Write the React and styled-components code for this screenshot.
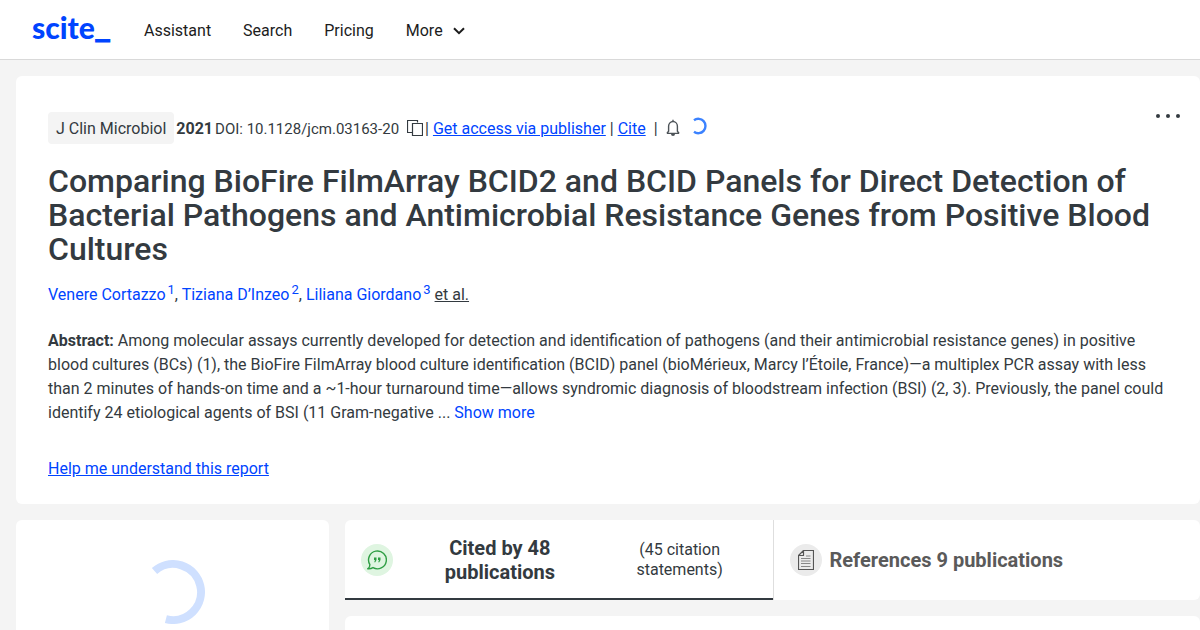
import React from "react";
import styled, { createGlobalStyle } from "styled-components";

const authors = ["Venere Cortazzo", "Tiziana D’Inzeo", "Liliana Giordano"];

function ChevronIcon() {
  return (
    <svg width="12" height="8" viewBox="0 0 12 8" fill="none" aria-hidden="true">
      <path d="M1 1.2l5 5 5-5" stroke="#1c1c1c" strokeWidth="2" />
    </svg>
  );
}

function CopyIcon() {
  return (
    <svg width="16" height="16" viewBox="0 0 16 16" fill="none" aria-hidden="true">
      <path
        d="M5 12.500H.5V.5h10v2M5.500 3.500h10v12h-10z"
        stroke="#333a40"
        strokeWidth="1.200"
      />
    </svg>
  );
}

function BellIcon() {
  return (
    <svg width="14" height="18" viewBox="0 0 14 18" fill="none" aria-hidden="true">
      <path
        d="M7 .8v1.600M.8 14.400h12.400M1 14.200l1.600-2V7.200a4.400 4.700 0 0 1 8.800 0v5l1.600 2"
        stroke="#4d5358"
        strokeWidth="1.400"
      />
      <path d="M5 15a2 2 0 0 0 4 0z" fill="#4d5358" />
    </svg>
  );
}

function QuoteIcon() {
  return (
    <svg width="20" height="20" viewBox="0 0 20 20" fill="none" aria-hidden="true">
      <path
        d="M2.900 14.600A8.900 8.900 0 1 1 6 17.600c-1.300.8-2.900 1.200-5 1.100 1.300-.9 1.900-2.200 1.900-4.100z"
        stroke="#2f9e44"
        strokeWidth="1.400"
      />
      <path
        d="M7 7.500h2.500V10L8.300 12.300H7.200L8 10H7zM11 7.500h2.500V10l-1.200 2.300h-1.100L12 10h-1z"
        fill="#2f9e44"
      />
    </svg>
  );
}

function DocumentIcon() {
  return (
    <svg width="16" height="20" viewBox="0 0 16 20" fill="none" aria-hidden="true">
      <path
        d="M5.500.5h10v19H.5V5.500zM5.500.5v5h-5"
        stroke="#555"
        strokeWidth="1.200"
        strokeLinejoin="round"
      />
      <path d="M8 6h4.500M3 8.500h9.500M3 11h9.500M3 13.500h9.500M3 16.500h9.500" stroke="#888" />
    </svg>
  );
}

function App() {
  return (
    <Page>
      <GlobalStyle />
      <Header>
        <Logo href="#">
          scite<Underscore>_</Underscore>
        </Logo>
        <Nav>
          <NavLink href="#">Assistant</NavLink>
          <NavLink href="#">Search</NavLink>
          <NavLink href="#">Pricing</NavLink>
          <MoreButton type="button">
            More
            <ChevronIcon />
          </MoreButton>
        </Nav>
      </Header>
      <Main>
        <Report>
          <MenuButton type="button" aria-label="Options">
            <svg width="24" height="4" viewBox="0 0 24 4" fill="#333a40">
              <circle cx="2" cy="2" r="2" />
              <circle cx="12" cy="2" r="2" />
              <circle cx="22" cy="2" r="2" />
            </svg>
          </MenuButton>
          <Meta>
            <Journal>J Clin Microbiol</Journal>
            <Year>2021</Year>
            <Doi>DOI: 10.1128/jcm.03163-20</Doi>
            <IconButton type="button" aria-label="Copy DOI">
              <CopyIcon />
            </IconButton>
            <Links>
              | <Link href="#" $underline>Get access via publisher</Link> |{" "}
              <Link href="#" $underline>Cite</Link>
            </Links>
            <Divider>|</Divider>
            <IconButton type="button" aria-label="Notify me">
              <BellIcon />
            </IconButton>
            <SmallSpinner width="16" height="18" viewBox="0 0 16 18" fill="none">
              <path d="M2 3.200A7.200 7.200 0 1 1 2 14.800" stroke="#3b82ff" strokeWidth="2.400" />
            </SmallSpinner>
          </Meta>
          <Title>
            Comparing BioFire FilmArray BCID2 and BCID Panels for Direct
            Detection of Bacterial Pathogens and Antimicrobial Resistance Genes
            from Positive Blood Cultures
          </Title>
          <Authors>
            {authors.map((name, index) => (
              <React.Fragment key={name}>
                {index > 0 && ", "}
                <Link href="#">
                  {name}
                  <Sup>{index + 1}</Sup>
                </Link>
              </React.Fragment>
            ))}{" "}
            <TextButton type="button">et al.</TextButton>
          </Authors>
          <Abstract>
            <strong>Abstract:</strong> Among molecular assays currently
            developed for detection and identification of pathogens (and their
            antimicrobial resistance genes) in positive blood cultures (BCs)
            (1), the BioFire FilmArray blood culture identification (BCID) panel
            (bioMérieux, Marcy l’Étoile, France)—a multiplex PCR assay with less
            than 2 minutes of hands-on time and a ~1-hour turnaround time—allows
            syndromic diagnosis of bloodstream infection (BSI) (2, 3).
            Previously, the panel could identify 24 etiological agents of BSI
            (11 Gram-negative ... <Link href="#">Show more</Link>
          </Abstract>
          <Link href="#" $underline>Help me understand this report</Link>
        </Report>
        <Columns>
          <Sidebar>
            <svg width="64" height="64" viewBox="0 0 64 64" fill="none">
              <path d="M13.500 11A28 28 0 1 1 24.900 59.100" stroke="#cfe0ff" strokeWidth="8" />
            </svg>
          </Sidebar>
          <Content>
            <Tabs>
              <Tab type="button" $active>
                <Badge $color="#dff5e1">
                  <QuoteIcon />
                </Badge>
                <CitedText>Cited by 48 publications</CitedText>
                <StatementText>(45 citation statements)</StatementText>
              </Tab>
              <Tab type="button">
                <Badge $color="#ebebeb">
                  <DocumentIcon />
                </Badge>
                References 9 publications
              </Tab>
            </Tabs>
            <Panel />
          </Content>
        </Columns>
      </Main>
    </Page>
  );
}

export default App;

const GlobalStyle = createGlobalStyle`
  * {
    box-sizing: border-box;
  }

  body {
    margin: 0;
    color: #333a40;
    background: #f4f4f4;
    font-family: Roboto, "Liberation Sans", sans-serif;
    font-size: 16px;
    line-height: 24px;
  }

  button {
    padding: 0;
    border: 0;
    color: inherit;
    background: none;
    font: inherit;
    cursor: pointer;
  }

  svg {
    display: block;
    flex-shrink: 0;
  }
`;

const Page = styled.div`
  display: flex;
  flex-direction: column;
  height: 100vh;
  overflow: hidden;
`;

const Header = styled.header`
  display: flex;
  flex-shrink: 0;
  align-items: center;
  height: 60px;
  padding: 0 32px;
  border-bottom: 1px solid #d9d9d9;
  background: #fff;
`;

const Logo = styled.a`
  width: 80px;
  padding-bottom: 4px;
  color: #0044ff;
  font-family: Lato, sans-serif;
  font-size: 30px;
  font-weight: 900;
  text-decoration: none;
  white-space: nowrap;
`;

const Underscore = styled.span`
  font-family: Inter, sans-serif;
  font-size: 32px;
  font-weight: 700;
  line-height: 24px;
`;

const Nav = styled.nav`
  display: flex;
  gap: 32px;
  margin-left: 32px;
  padding-top: 2px;
  color: #1c1c1c;
`;

const NavLink = styled.a`
  color: inherit;
  text-decoration: none;
`;

const MoreButton = styled.button`
  display: flex;
  align-items: center;
  gap: 10px;
`;

const Main = styled.main`
  display: flex;
  flex: 1;
  flex-direction: column;
  gap: 16px;
  padding: 16px 0 0 16px;
  min-height: 0;
`;

const Report = styled.section`
  position: relative;
  flex-shrink: 0;
  padding: 36px 32px 23px;
  border-radius: 6px;
  background: #fff;
`;

const MenuButton = styled.button`
  position: absolute;
  top: 32px;
  right: 12px;
  padding: 6px 8px;
`;

const Meta = styled.div`
  display: flex;
  align-items: center;
`;

const Journal = styled.span`
  margin-right: 2px;
  padding: 5px 8px 3px;
  border-radius: 4px;
  background: #f4f4f4;
`;

const MetaText = styled.span`
  padding-top: 2px;
`;

const Year = styled(MetaText)`
  font-weight: 700;
`;

const Doi = styled(MetaText)`
  margin: 0 8px 0 2px;
  font-size: 15px;
`;

const IconButton = styled.button`
  display: flex;
`;

const Links = styled(MetaText)`
  margin-left: 2px;
`;

const Divider = styled(MetaText)`
  margin: 0 8px;
`;

const SmallSpinner = styled.svg`
  margin: 0 0 4px 12px;
`;

const Link = styled.a`
  color: #0044ff;
  text-decoration: ${({ $underline }) => ($underline ? "underline" : "none")};
`;

const Title = styled.h1`
  margin: 20px 0 17px;
  font-size: 32px;
  font-weight: 500;
  line-height: 34px;
`;

const Authors = styled.div`
  margin-bottom: 22px;
`;

const Sup = styled.sup`
  position: relative;
  top: -6px;
  margin-left: 2px;
  font-size: 13px;
  line-height: 0;
  vertical-align: baseline;
`;

const TextButton = styled.button`
  text-decoration: underline;
`;

const Abstract = styled.p`
  margin: 0 0 32px;
`;

const Columns = styled.div`
  display: grid;
  flex: 1;
  grid-template-columns: 313px 1fr;
  gap: 16px;
  min-height: 0;
`;

const Sidebar = styled.aside`
  display: flex;
  justify-content: center;
  height: 400px;
  padding-top: 40px;
  border-radius: 6px;
  background: #fff;
`;

const Content = styled.div`
  display: flex;
  flex-direction: column;
  gap: 16px;
`;

const Tabs = styled.div`
  display: grid;
  flex-shrink: 0;
  grid-template-columns: 1fr 1fr;
  border-radius: 6px 6px 6px 0;
  background: #fff;
  overflow: hidden;
`;

const Tab = styled.button`
  display: flex;
  align-items: center;
  height: 80px;
  padding: 0 16px;
  color: ${({ $active }) => ($active ? "#333a40" : "#5a5a5a")};
  box-shadow: ${({ $active }) => ($active ? "inset 0 -2px #333a40" : "none")};
  font-size: 20px;
  font-weight: 700;

  & + & {
    border-left: 1px solid #dedede;
  }
`;

const Badge = styled.span`
  display: flex;
  flex-shrink: 0;
  align-items: center;
  justify-content: center;
  width: 32px;
  height: 32px;
  margin-right: 8px;
  border-radius: 50%;
  background: ${({ $color }) => $color};
`;

const CitedText = styled.span`
  flex: 9 1 0;
`;

const StatementText = styled.span`
  flex: 7 1 0;
  margin-left: 4px;
  font-size: 16px;
  font-weight: 400;
  line-height: 20px;
`;

const Panel = styled.section`
  flex-shrink: 0;
  height: 320px;
  border-radius: 6px;
  background: #fff;
`;
